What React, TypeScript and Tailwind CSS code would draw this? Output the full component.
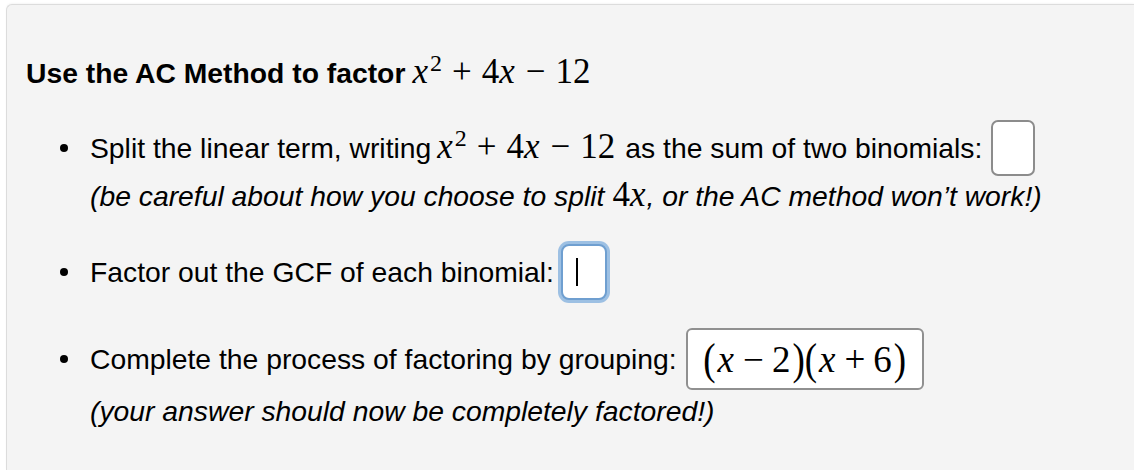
import React from "react";

const M = ({ children }: { children: React.ReactNode }) => (
  <span className="font-['Liberation_Serif',serif] text-[35px] leading-none whitespace-nowrap">{children}</span>
);
const X = () => <i className="font-['Liberation_Serif',serif] italic mr-[1px]">x</i>;
const Op = ({ c }: { c: string }) => <span className="mx-[10px]">{c}</span>;
const OpS = ({ c }: { c: string }) => <span className="mx-[8px]">{c}</span>;

const Poly = () => (
  <M>
    <X />
    <sup className="text-[24px] ml-[1px]">2</sup>
    <Op c="+" />
    4<X />
    <Op c="−" />
    12
  </M>
);

const Bullet = () => (
  <span className="w-[64px] shrink-0 flex">
    <span className="ml-[34px] w-[8px] h-[8px] rounded-full bg-black" />
  </span>
);

export default function App() {
  return (
    <div className="min-h-screen bg-white pl-[6px] pt-[4px] font-['Liberation_Sans',Arial,sans-serif] text-black">
      <div className="h-[466px] bg-[#f4f4f4] border-l border-t border-[#dcdcdc] rounded-tl-[6px] shadow-[0_-1px_2px_rgba(0,0,0,0.04)] pl-[19px] pt-[51px]">
        <div className="h-[34px] flex items-center text-[28.3px] font-bold whitespace-nowrap">
          <span>Use the AC Method to factor</span>
          <span className="ml-[7px] font-normal">
            <Poly />
          </span>
        </div>

        <div className="mt-[30px]">
          <div className="h-[56px] flex items-center text-[28.3px] whitespace-nowrap">
            <Bullet />
            <span>Split the linear term, writing</span>
            <span className="ml-[6px] mr-[10px]">
              <Poly />
            </span>
            <span>as the sum of two binomials:</span>
            <span className="ml-[9px] w-[44px] h-[56px] rounded-[7px] border-2 border-[#8c8c8c] bg-white" />
          </div>
          <div className="mt-[3px] h-[34px] flex items-center pl-[64px] text-[28.3px] italic whitespace-nowrap">
            <span>(be careful about how you choose to split</span>
            <span className="ml-[8px] not-italic">
              <M>
                4<X />
              </M>
            </span>
            <span>, or the AC method won’t work!)</span>
          </div>

          <div className="mt-[30px] h-[58px] flex items-center text-[28.3px] whitespace-nowrap">
            <Bullet />
            <span>Factor out the GCF of each binomial:</span>
            <span className="ml-[7px] w-[46px] h-[56px] rounded-[8px] border-2 border-[#6f9fd0] bg-white shadow-[0_0_0_3px_rgba(120,170,220,0.7)] flex items-center pl-[13px]">
              <span className="w-[2px] h-[28px] bg-black" />
            </span>
          </div>

          <div className="mt-[27px] h-[62px] flex items-center text-[28.3px] whitespace-nowrap">
            <Bullet />
            <span>Complete the process of factoring by grouping:</span>
            <span className="ml-[9px] w-[238px] h-[62px] rounded-[6px] border-2 border-[#909090] bg-white flex items-center justify-center">
              <span className="font-['Liberation_Serif',serif] text-[37px] leading-none">
                <span className="inline-block scale-y-[1.2] mr-[2px]">(</span>
                <X />
                <OpS c="−" />
                2
                <span className="inline-block scale-y-[1.2] ml-[2px]">)</span>
                <span className="inline-block scale-y-[1.2] mr-[2px]">(</span>
                <X />
                <OpS c="+" />
                6
                <span className="inline-block scale-y-[1.2] ml-[2px]">)</span>
              </span>
            </span>
          </div>
          <div className="mt-[4px] h-[34px] flex items-center pl-[64px] text-[28.3px] italic whitespace-nowrap">
            (your answer should now be completely factored!)
          </div>
        </div>
      </div>
    </div>
  );
}
